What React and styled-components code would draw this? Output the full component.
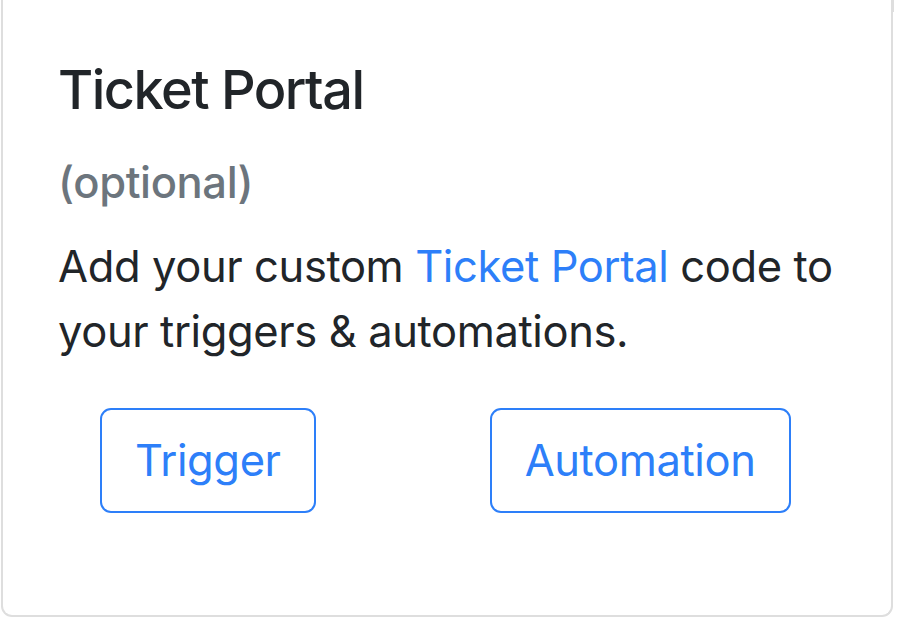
import styled, { createGlobalStyle } from "styled-components";

const GlobalStyle = createGlobalStyle`
  html, body {
    margin: 0;
    padding: 0;
    background: #fff;
  }
  body {
    font-family: Inter, "Noto Sans", "Liberation Sans", sans-serif;
    color: #212529;
    letter-spacing: -0.024em;
  }
`;

const App = () => {
  return (
    <>
      <GlobalStyle />
      <Page>
        <Card>
          <Title>Ticket Portal</Title>
          <Subtitle>(optional)</Subtitle>
          <Text>
            Add your custom <Link href="#">Ticket Portal</Link> code to your
            triggers &amp; automations.
          </Text>
          <Actions>
            <OutlineButton>Trigger</OutlineButton>
            <OutlineButton>Automation</OutlineButton>
          </Actions>
        </Card>
      </Page>
    </>
  );
};

const Page = styled.div`
  width: 904px;
  height: 622px;
  padding: 0 11px 5px 1px;
  box-sizing: border-box;
`;

const Card = styled.div`
  height: 100%;
  box-sizing: border-box;
  border: 2.5px solid #dedede;
  border-top: none;
  border-radius: 0 0 11px 11px;
  padding: 58px 40px 0 55px;
  position: relative;

  &::before {
    content: "";
    position: absolute;
    left: -2.5px;
    right: -2.5px;
    top: -10px;
    height: 20px;
    border: 2.5px solid #dedede;
    border-bottom: none;
    border-radius: 11px 11px 0 0;
  }
`;

const Title = styled.h5`
  margin: 0 0 33px;
  font-size: 54px;
  font-weight: 500;
  line-height: 1.2;
  letter-spacing: -0.028em;
  color: #212529;
`;

const Subtitle = styled.h6`
  margin: 0 0 26px;
  font-size: 43.5px;
  font-weight: 500;
  line-height: 1.2;
  color: #6c757d;
`;

const Text = styled.p`
  margin: 0 0 44px;
  font-size: 43.5px;
  line-height: 65px;
  color: #212529;
`;

const Link = styled.a`
  color: #2d7ff9;
  text-decoration: none;
`;

const Actions = styled.div`
  display: flex;
  gap: 174px;
  padding-left: 42px;
`;

const OutlineButton = styled.button`
  font-family: inherit;
  font-size: 43.5px;
  letter-spacing: inherit;
  line-height: 65px;
  padding: 18px 33px;
  background: transparent;
  color: #2d7ff9;
  border: 2.5px solid #2d7ff9;
  border-radius: 11px;
  cursor: pointer;
`;

export default App;
